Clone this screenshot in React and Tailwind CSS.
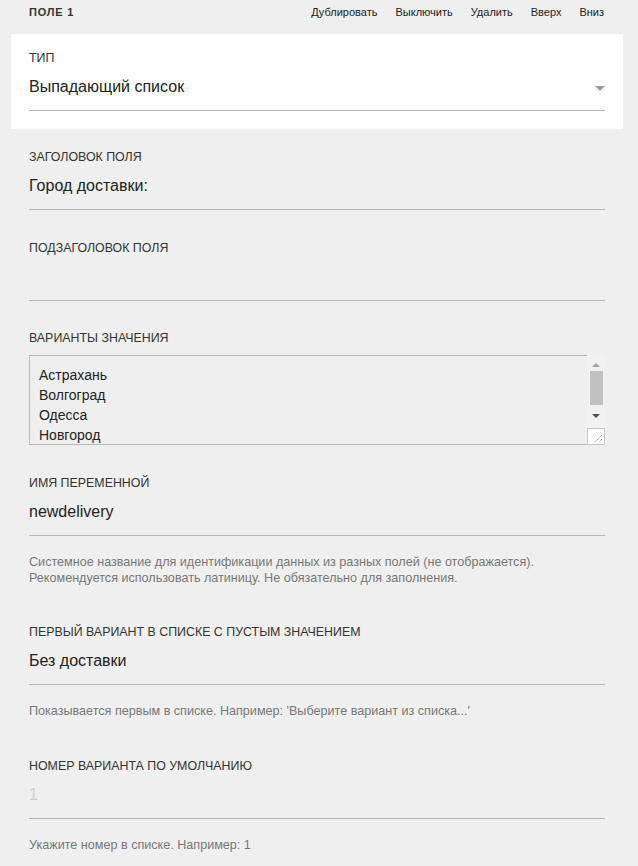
const font = { fontFamily: '"Liberation Sans", Arial, sans-serif' };

function Field({ label, value, placeholder, help, children, className = '' }) {
  return (
    <div className={className}>
      <div className="text-[12.4px] leading-4 uppercase text-[#333]">{label}</div>
      <div className="mt-[11px] pb-[13px] border-b border-[#b8b8b8] flex items-center">
        <div className={`flex-1 text-[16px] leading-5 h-5 ${placeholder ? 'text-[#cfcfcf]' : 'text-[#222]'}`}>
          {value || placeholder}
        </div>
        {children}
      </div>
      {help && (
        <div className="mt-[18px] text-[12.6px] leading-4 text-[#777]">
          {help.map((l) => (
            <div key={l}>{l}</div>
          ))}
        </div>
      )}
    </div>
  );
}

function Scrollbar() {
  return (
    <div className="w-[18px] flex flex-col bg-[#f1f1f1]">
      <div className="flex-1 flex flex-col items-center">
        <svg width="8" height="5" viewBox="0 0 8 5" className="mt-[7px]">
          <path d="M0 5 L4 1 L8 5 Z" fill="#a3a3a3" />
        </svg>
        <div className="mt-[4px] w-[13px] h-[34px] bg-[#c1c1c1] ml-[1px]" />
        <svg width="8" height="5" viewBox="0 0 8 5" className="mt-[9px]">
          <path d="M0 0 L8 0 L4 4 Z" fill="#505050" />
        </svg>
      </div>
      <div className="h-[17px] bg-white border border-[#c8c8c8] relative">
        <svg width="16" height="15" viewBox="0 0 16 15" className="absolute left-0 top-0">
          <path d="M14 6 L7 13 M14 10 L11 13" stroke="#777" strokeWidth="1" strokeDasharray="1 1" />
        </svg>
      </div>
    </div>
  );
}

export default function App() {
  const options = ['Астрахань', 'Волгоград', 'Одесса', 'Новгород'];
  return (
    <div className="min-h-[866px] bg-[#efefef] pb-8" style={font}>
      {/* header */}
      <div className="h-[34px] pt-[5px] pl-[29px] pr-[34px] flex justify-between text-[11px] leading-[14px]">
        <span className="font-bold tracking-[0.8px] text-[#333]">ПОЛЕ 1</span>
        <div className="flex gap-[18px] text-[#222]">
          <span>Дублировать</span>
          <span>Выключить</span>
          <span>Удалить</span>
          <span>Вверх</span>
          <span>Вниз</span>
        </div>
      </div>

      {/* type panel */}
      <div className="ml-[11px] mr-[15px] bg-white px-[18px] pt-[16px] pb-[18px]">
        <Field label="Тип" value="Выпадающий список">
          <svg width="10" height="6" viewBox="0 0 10 6" className="mt-[4px]">
            <path d="M0 0 L10 0 L5 5 Z" fill="#9a9a9a" />
          </svg>
        </Field>
      </div>

      <div className="pl-[29px] pr-[33px] pt-[20px]">
        <Field label="Заголовок поля" value="Город доставки:" />
        <Field className="mt-[30px]" label="Подзаголовок поля" value="" />

        {/* variants */}
        <div className="mt-[29px]">
          <div className="text-[12.4px] leading-4 uppercase text-[#333]">Варианты значения</div>
          <div className="mt-[9px] h-[90px] flex">
            <div className="flex-1 border-l border-t border-b border-[#b8b8b8] overflow-hidden pl-[9px] pt-[9px] text-[14px] leading-5 text-[#222]">
              {options.map((o) => (
                <div key={o}>{o}</div>
              ))}
            </div>
            <Scrollbar />
          </div>
        </div>

        <Field
          className="mt-[30px]"
          label="Имя переменной"
          value="newdelivery"
          help={[
            'Системное название для идентификации данных из разных полей (не отображается).',
            'Рекомендуется использовать латиницу. Не обязательно для заполнения.',
          ]}
        />
        <Field
          className="mt-[38px]"
          label="Первый вариант в списке с пустым значением"
          value="Без доставки"
          help={["Показывается первым в списке. Например: 'Выберите вариант из списка...'"]}
        />
        <Field
          className="mt-[39px]"
          label="Номер варианта по умолчанию"
          placeholder="1"
          help={['Укажите номер в списке. Например: 1']}
        />
      </div>
    </div>
  );
}
